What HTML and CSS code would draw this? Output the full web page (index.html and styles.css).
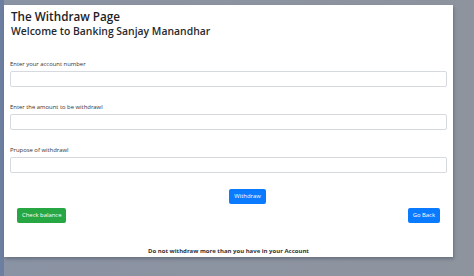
FILE: index.html
```html
<!DOCTYPE html>
<html>
<head>
<meta charset="utf-8">
<link rel="stylesheet" href="styles.css">
</head>
<body>
<div class="desk">
  <div class="window">
    <h1 class="title">The Withdraw Page</h1>
    <h2 class="welcome">Welcome to Banking Sanjay Manandhar</h2>
    <form class="form">
      <div class="group">
        <label class="label">Enter your account number</label>
        <input class="input" type="text">
      </div>
      <div class="group">
        <label class="label">Enter the amount to be withdrawl</label>
        <input class="input" type="text">
      </div>
      <div class="group">
        <label class="label">Prupose of withdrawl</label>
        <input class="input" type="text">
      </div>
      <div class="submit-row">
        <button type="button" class="btn btn-blue">Withdraw</button>
      </div>
      <div class="nav-row">
        <button type="button" class="btn btn-green">Check balance</button>
        <button type="button" class="btn btn-blue">Go Back</button>
      </div>
    </form>
    <p class="note">Do not withdraw more than you have in your Account</p>
  </div>
</div>
</body>
</html>
```
FILE: styles.css
```css
html, body {
  margin: 0;
  padding: 0;
}
body {
  width: 474px;
  height: 276px;
  overflow: hidden;
  background: linear-gradient(90deg, #6d7fa0 0, #6d7fa0 4px, #8a93a3 4px, #8e949e 100%);
  font-family: "Open Sans", "Noto Sans", sans-serif;
  color: #212529;
}
.desk {
  padding: 5px 21px 0 4px;
}
.window {
  background: #fff;
  height: 252px;
  padding: 0 6px 0 6px;
  box-sizing: border-box;
  box-shadow: 1px 2px 3px rgba(40, 50, 70, 0.35);
  display: flex;
  flex-direction: column;
}
.title {
  margin: 3px 0 0 1px;
  font-size: 11.7px;
  font-weight: 600;
  line-height: 16px;
  color: #1e2226;
}
.welcome {
  margin: 0 0 0 1px;
  font-size: 10.4px;
  font-weight: 600;
  line-height: 14px;
  color: #262a2e;
}
.form {
  margin-top: 22px;
  display: flex;
  flex-direction: column;
}
.group {
  display: flex;
  flex-direction: column;
  margin-bottom: 16px;
}
.label {
  font-size: 5.9px;
  line-height: 9px;
  margin-bottom: 2px;
  color: #333;
}
.input {
  height: 16px;
  box-sizing: border-box;
  border: 1px solid #d6dadf;
  border-radius: 2px;
  margin: 0;
  padding: 0;
  background: #fff;
}
.submit-row {
  display: flex;
  justify-content: center;
  padding-left: 38px;
}
.nav-row {
  display: flex;
  justify-content: space-between;
  padding: 0 7px 0 7px;
  margin-top: 4px;
}
.btn {
  border: none;
  border-radius: 2px;
  color: #fff;
  font-family: "Open Sans", "Noto Sans", sans-serif;
  font-size: 5.9px;
  height: 15px;
  padding: 0 5px;
  line-height: 15px;
}
.btn-blue {
  background: #0a7bff;
}
.btn-green {
  background: #27a744;
}
.note {
  margin: auto 0 2px 0;
  text-align: center;
  font-size: 6px;
  font-weight: 700;
  color: #333;
}
```
